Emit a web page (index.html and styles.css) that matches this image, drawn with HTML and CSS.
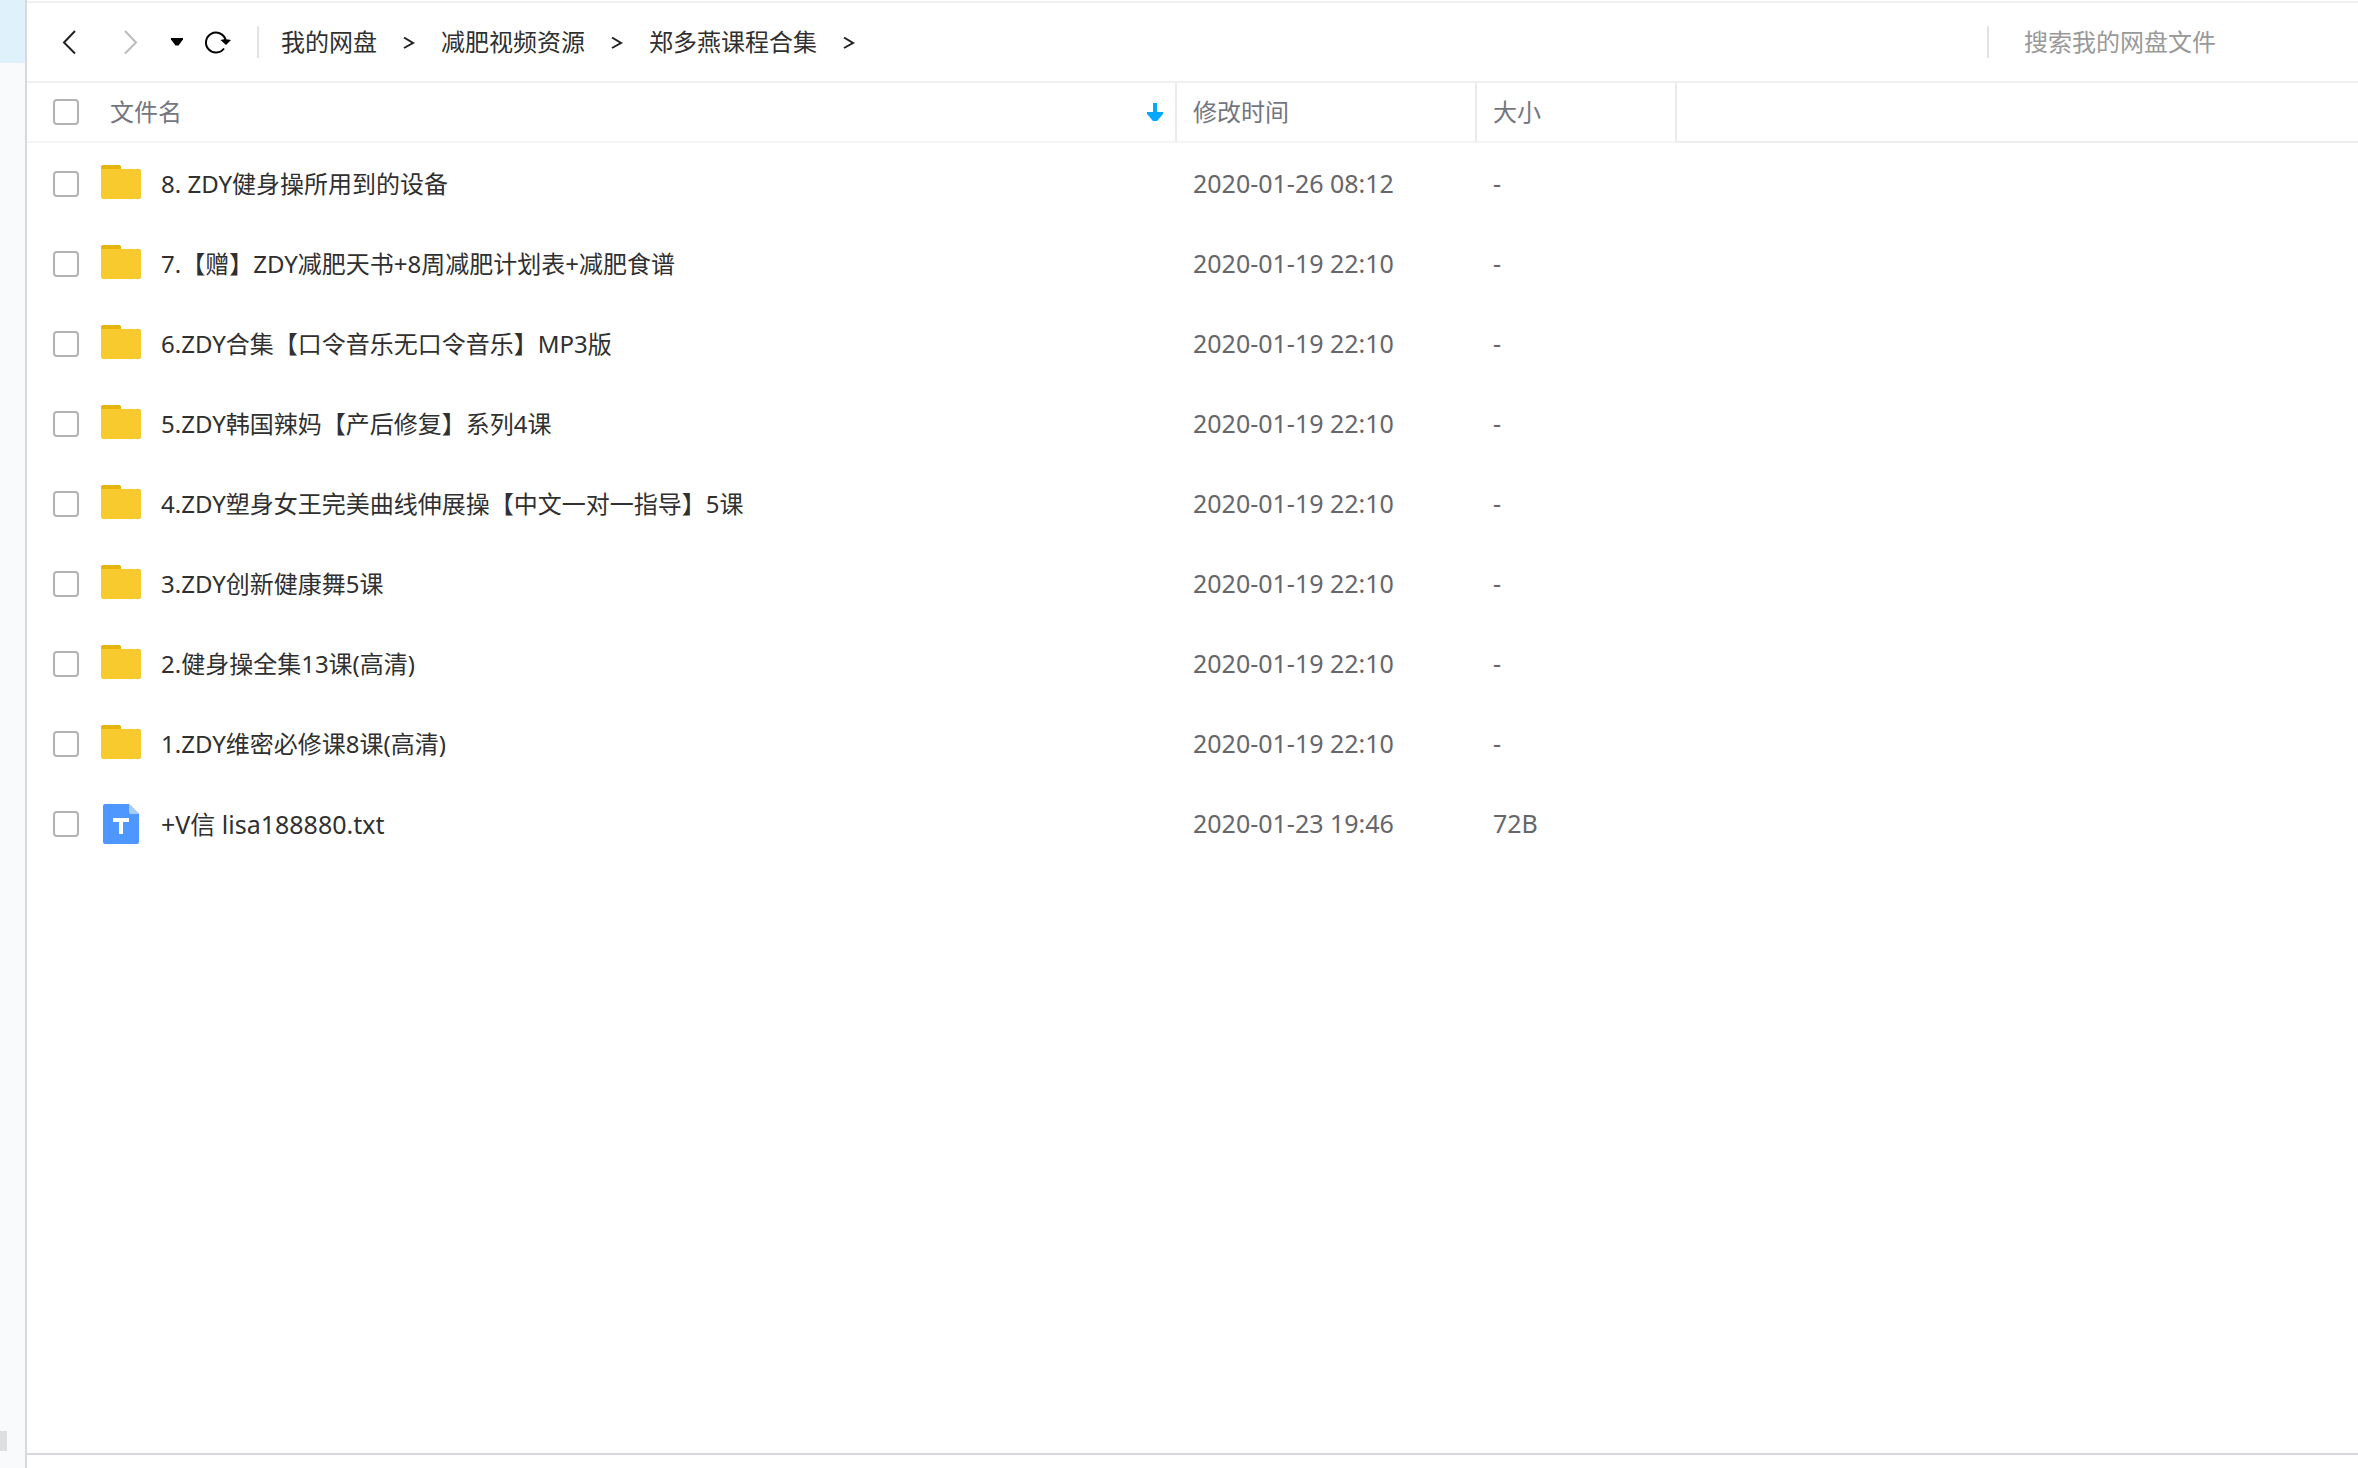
FILE: index.html
```html
<!DOCTYPE html>
<html lang="zh-CN">
<head>
<meta charset="utf-8">
<title>我的网盘</title>
<link rel="stylesheet" href="styles.css">
</head>
<body>
<div class="app">
  <aside class="sidebar">
    <div class="sidebar-active"></div>
    <div class="sidebar-thumb"></div>
  </aside>
  <main class="main">
    <header class="toolbar">
      <nav class="history" aria-label="导航">
        <button class="tool" type="button" aria-label="后退"><svg width="14" height="26" viewBox="0 0 14 26"><path d="M13 2L2 13.500l11 11" fill="none" stroke="#222" stroke-width="2"/></svg></button>
        <button class="tool tool-forward" type="button" aria-label="前进"><svg width="14" height="26" viewBox="0 0 14 26"><path d="M1 2L12 13.500 1 24.500" fill="none" stroke="#bbb" stroke-width="2"/></svg></button>
        <button class="tool tool-recent" type="button" aria-label="最近位置"><svg width="12" height="8" viewBox="0 0 12 8"><path d="M0 0h12v1.500L7.500 7.500h-3L0 1.500z" fill="#000"/></svg></button>
        <button class="tool tool-refresh" type="button" aria-label="刷新"><svg width="28" height="24" viewBox="0 0 28 24"><path d="M20 18.500A10 10 0 1 1 21.500 9.500" fill="none" stroke="#000" stroke-width="2"/><path d="M16.500 10L21 9l6 1-5 5z" fill="#000"/></svg></button>
      </nav>
      <nav class="crumbs" aria-label="路径">
        <a href="#">我的网盘</a><svg class="crumb-arrow" width="12" height="14" viewBox="0 0 12 14"><path d="M1 2.500L10 8 1 13" fill="none" stroke="#222" stroke-width="2"/></svg>
        <a href="#">减肥视频资源</a><svg class="crumb-arrow" width="12" height="14" viewBox="0 0 12 14"><path d="M1 2.500L10 8 1 13" fill="none" stroke="#222" stroke-width="2"/></svg>
        <a href="#">郑多燕课程合集</a><svg class="crumb-arrow" width="12" height="14" viewBox="0 0 12 14"><path d="M1 2.500L10 8 1 13" fill="none" stroke="#222" stroke-width="2"/></svg>
      </nav>
      <div class="search"><input class="search-input" type="text" placeholder="搜索我的网盘文件" aria-label="搜索我的网盘文件"></div>
    </header>
    <div class="files">
      <table class="table">
        <colgroup><col class="col-name"><col class="col-date"><col class="col-size"><col></colgroup>
        <thead>
          <tr>
            <th scope="col"><div class="cell cell-head"><input class="check" type="checkbox" aria-label="全选"><span>文件名</span><svg class="sort" width="16" height="18" viewBox="0 0 16 18"><path d="M6 0h4v9h6v2l-6 7H6l-6-7V9h6z" fill="#06a7ff"/></svg></div></th>
            <th scope="col">修改时间</th>
            <th scope="col">大小</th>
            <td class="head-rest"></td>
          </tr>
        </thead>
        <tbody>
          <tr><td><div class="cell cell-file"><input class="check" type="checkbox" id="f8"><svg class="icon" width="40" height="40" viewBox="0 0 40 40"><path d="M0 8V3q0-2 2-2h16q2 0 2 2v5z" fill="#e8b40a"/><path d="M0 5h38q2 0 2 2v26q0 2-2 2H2q-2 0-2-2z" fill="#f8ca2e"/></svg><label for="f8">8. ZDY健身操所用到的设备</label></div></td><td class="date">2020-01-26 08:12</td><td class="size">-</td><td></td></tr>
          <tr><td><div class="cell cell-file"><input class="check" type="checkbox" id="f7"><svg class="icon" width="40" height="40" viewBox="0 0 40 40"><path d="M0 8V3q0-2 2-2h16q2 0 2 2v5z" fill="#e8b40a"/><path d="M0 5h38q2 0 2 2v26q0 2-2 2H2q-2 0-2-2z" fill="#f8ca2e"/></svg><label for="f7">7.【赠】ZDY减肥天书+8周减肥计划表+减肥食谱</label></div></td><td class="date">2020-01-19 22:10</td><td class="size">-</td><td></td></tr>
          <tr><td><div class="cell cell-file"><input class="check" type="checkbox" id="f6"><svg class="icon" width="40" height="40" viewBox="0 0 40 40"><path d="M0 8V3q0-2 2-2h16q2 0 2 2v5z" fill="#e8b40a"/><path d="M0 5h38q2 0 2 2v26q0 2-2 2H2q-2 0-2-2z" fill="#f8ca2e"/></svg><label for="f6">6.ZDY合集【口令音乐无口令音乐】MP3版</label></div></td><td class="date">2020-01-19 22:10</td><td class="size">-</td><td></td></tr>
          <tr><td><div class="cell cell-file"><input class="check" type="checkbox" id="f5"><svg class="icon" width="40" height="40" viewBox="0 0 40 40"><path d="M0 8V3q0-2 2-2h16q2 0 2 2v5z" fill="#e8b40a"/><path d="M0 5h38q2 0 2 2v26q0 2-2 2H2q-2 0-2-2z" fill="#f8ca2e"/></svg><label for="f5">5.ZDY韩国辣妈【产后修复】系列4课</label></div></td><td class="date">2020-01-19 22:10</td><td class="size">-</td><td></td></tr>
          <tr><td><div class="cell cell-file"><input class="check" type="checkbox" id="f4"><svg class="icon" width="40" height="40" viewBox="0 0 40 40"><path d="M0 8V3q0-2 2-2h16q2 0 2 2v5z" fill="#e8b40a"/><path d="M0 5h38q2 0 2 2v26q0 2-2 2H2q-2 0-2-2z" fill="#f8ca2e"/></svg><label for="f4">4.ZDY塑身女王完美曲线伸展操【中文一对一指导】5课</label></div></td><td class="date">2020-01-19 22:10</td><td class="size">-</td><td></td></tr>
          <tr><td><div class="cell cell-file"><input class="check" type="checkbox" id="f3"><svg class="icon" width="40" height="40" viewBox="0 0 40 40"><path d="M0 8V3q0-2 2-2h16q2 0 2 2v5z" fill="#e8b40a"/><path d="M0 5h38q2 0 2 2v26q0 2-2 2H2q-2 0-2-2z" fill="#f8ca2e"/></svg><label for="f3">3.ZDY创新健康舞5课</label></div></td><td class="date">2020-01-19 22:10</td><td class="size">-</td><td></td></tr>
          <tr><td><div class="cell cell-file"><input class="check" type="checkbox" id="f2"><svg class="icon" width="40" height="40" viewBox="0 0 40 40"><path d="M0 8V3q0-2 2-2h16q2 0 2 2v5z" fill="#e8b40a"/><path d="M0 5h38q2 0 2 2v26q0 2-2 2H2q-2 0-2-2z" fill="#f8ca2e"/></svg><label for="f2">2.健身操全集13课(高清)</label></div></td><td class="date">2020-01-19 22:10</td><td class="size">-</td><td></td></tr>
          <tr><td><div class="cell cell-file"><input class="check" type="checkbox" id="f1"><svg class="icon" width="40" height="40" viewBox="0 0 40 40"><path d="M0 8V3q0-2 2-2h16q2 0 2 2v5z" fill="#e8b40a"/><path d="M0 5h38q2 0 2 2v26q0 2-2 2H2q-2 0-2-2z" fill="#f8ca2e"/></svg><label for="f1">1.ZDY维密必修课8课(高清)</label></div></td><td class="date">2020-01-19 22:10</td><td class="size">-</td><td></td></tr>
          <tr><td><div class="cell cell-file"><input class="check" type="checkbox" id="f0"><svg class="icon" width="40" height="40" viewBox="0 0 40 40"><path d="M4 0h24l10 10v28q0 2-2 2H4q-2 0-2-2V2q0-2 2-2z" fill="#4d97ff"/><path d="M28 0l10 10h-8q-2 0-2-2z" fill="#a6ccff"/><path d="M12 14h16v4h-6v12h-4V18h-6z" fill="#fff"/></svg><label class="name-latin" for="f0">+V信 lisa188880.txt</label></div></td><td class="date">2020-01-23 19:46</td><td class="size">72B</td><td></td></tr>
        </tbody>
      </table>
    </div>
    <footer class="status"></footer>
  </main>
</div>
</body>
</html>
```
FILE: styles.css
```css
* {
  box-sizing: border-box;
}

body {
  margin: 0;
  background: #fff;
  color: #303030;
  font: 24px/32px "Noto Sans", "Noto Sans CJK SC", sans-serif;
}

.app {
  display: flex;
  min-height: 100vh;
}

.sidebar {
  display: flex;
  flex-direction: column;
  justify-content: space-between;
  width: 27px;
  padding-bottom: 17px;
  border-right: 2px solid #d8d8de;
  background: #f9fafc;
}

.sidebar-active {
  height: 63px;
  background: #dff1fb;
}

.sidebar-thumb {
  width: 7px;
  height: 20px;
  background: #dfdfdf;
}

.main {
  display: flex;
  flex: 1;
  flex-direction: column;
  min-width: 0;
  padding-top: 1px;
}

.toolbar {
  display: flex;
  align-items: center;
  height: 82px;
  border-top: 2px solid #f0f0f0;
  border-bottom: 2px solid #f0f0f0;
}

.history {
  display: flex;
  align-items: center;
  height: 32px;
  padding: 0 25px 0 35px;
  border-right: 2px solid #e3e3e3;
}

.tool {
  display: flex;
  padding: 0;
  border: 0;
  background: none;
}

.tool-forward {
  margin-left: 48px;
}

.tool-recent {
  margin-left: 33px;
}

.tool-refresh {
  margin-left: 21px;
}

.crumbs {
  display: flex;
  flex: 1;
  align-items: center;
  gap: 26px;
  padding-left: 22px;
}

.crumbs a {
  color: #303030;
  text-decoration: none;
}

.search {
  width: 371px;
  padding-left: 35px;
  border-left: 2px solid #e3e3e3;
}

.search-input {
  display: block;
  width: 100%;
  height: 32px;
  padding: 0;
  border: 0;
  outline: 0;
  background: none;
  color: #303030;
  font: inherit;
}

.search-input::placeholder {
  color: #999;
  opacity: 1;
}

.files {
  flex: 1;
}

.table {
  width: 100%;
  border-collapse: separate;
  border-spacing: 0;
  table-layout: fixed;
}

.col-name {
  width: 1150px;
}

.col-date {
  width: 300px;
}

.col-size {
  width: 200px;
}

th,
td {
  height: 80px;
  padding: 0 0 0 16px;
  text-align: left;
  white-space: nowrap;
}

th,
.head-rest {
  height: 60px;
  border-bottom: 2px solid #f5f5f5;
  color: #73767f;
  font-weight: 400;
}

th {
  border-right: 2px solid #ebebed;
}

.head-rest {
  border-bottom-color: #eeeef2;
}

th:first-child,
td:first-child {
  padding-left: 26px;
}

.cell {
  display: flex;
  align-items: center;
}

.cell-head {
  gap: 31px;
  padding-right: 12px;
}

.cell-file {
  padding-top: 2px;
}

.check {
  width: 26px;
  height: 26px;
  margin: 0;
  border: 2px solid #b3b3b3;
  border-radius: 4px;
  appearance: none;
  background: #fff;
}

.check:checked {
  background: #06a7ff;
}

.icon {
  margin: 0 20px 0 22px;
}

.sort {
  margin-left: auto;
}

.name-latin {
  font-size: 25px;
}

.date,
.size {
  color: #66666b;
  font-size: 25px;
}

.status {
  height: 15px;
  border-top: 2px solid #d8d8de;
}
```
